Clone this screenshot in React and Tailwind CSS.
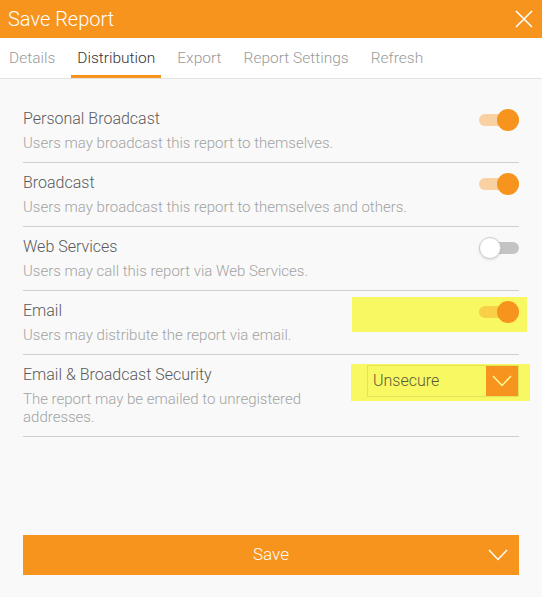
import { useState } from 'react';

const tabs = ['Details', 'Distribution', 'Export', 'Report Settings', 'Refresh'];

const rows = [
    { title: 'Personal Broadcast', desc: 'Users may broadcast this report to themselves.', on: true },
    { title: 'Broadcast', desc: 'Users may broadcast this report to themselves and others.', on: true },
    { title: 'Web Services', desc: 'Users may call this report via Web Services.', on: false },
    { title: 'Email', desc: 'Users may distribute the report via email.', on: true, highlight: true },
];

function Chevron({ className }) {
    return (
        <svg viewBox="0 0 20 12" className={className} fill="none" stroke="currentColor" strokeWidth="1.5">
            <path d="M1 1 L10 10.5 L19 1" />
        </svg>
    );
}

function Toggle({ on }) {
    return (
        <div className="relative w-[40px] h-[22px]">
            <div className={`absolute left-0 right-0 top-[5px] h-[12px] rounded-full ${on ? 'bg-[#F7941D]/40' : 'bg-[#c4c4c4]'}`} />
            <div className={`absolute top-0 w-[22px] h-[22px] rounded-full ${on ? 'right-0 bg-[#F7941D]' : 'left-0 bg-white border border-[#d0d0d0] shadow-sm'}`} />
        </div>
    );
}

export default function App() {
    const [active, setActive] = useState('Distribution');

    return (
        <div className="w-[542px] h-[597px] flex flex-col bg-[#f9f9f9] font-['Roboto',sans-serif] font-light">
            <div className="h-[38px] bg-[#F7941D] flex items-center justify-between pl-[8px] pr-[9px]">
                <span className="text-white text-[20px] leading-none">Save Report</span>
                <svg viewBox="0 0 18 18" className="w-[18px] h-[18px] text-white" fill="none" stroke="currentColor" strokeWidth="1.6">
                    <path d="M1 1 L17 17 M17 1 L1 17" />
                </svg>
            </div>

            <div className="h-[41px] bg-white border-b border-[#e2e2e2] flex pl-[3px] gap-[10px]">
                {tabs.map((t) => (
                    <button key={t} onClick={() => setActive(t)} className={`px-[6px] pt-[4px] text-[15.5px] font-light border-b-[3px] ${active === t ? 'text-[#333] border-[#F7941D]' : 'text-[#9a9a9a] border-transparent'}`}>
                        {t}
                    </button>
                ))}
            </div>

            <div className="flex-1 flex flex-col px-[23px] pt-[20px] pb-[22px]">
                {rows.map((r) => (
                    <div key={r.title} className="flex justify-between border-b border-[#cfcfcf]">
                        <div className="pt-[10px] pb-[10px]">
                            <p className="text-[16px] leading-[20px] text-[#5a5a5a]">{r.title}</p>
                            <p className="mt-[5px] text-[15px] leading-[18px] text-[#a3a3a3]">{r.desc}</p>
                        </div>
                        <div className={`mt-[6px] h-[35px] pt-[4px] flex justify-end ${r.highlight ? 'bg-[#f8f862] w-[175px] -mr-[8px] pr-[8px]' : ''}`}>
                            <Toggle on={r.on} />
                        </div>
                    </div>
                ))}

                <div className="flex justify-between border-b border-[#cfcfcf]">
                    <div className="pt-[10px] pb-[10px] w-[310px]">
                        <p className="text-[16px] leading-[20px] text-[#5a5a5a]">Email &amp; Broadcast Security</p>
                        <p className="mt-[5px] text-[15px] leading-[18px] text-[#a3a3a3]">The report may be emailed to unregistered addresses.</p>
                    </div>
                    <div className="mt-[9px] -mr-[11px] w-[179px] h-[37px] pt-[1px] pl-[16px] pr-[11px] bg-[#f8f862]">
                        <div className="h-[32px] border border-[#e3e35a] flex items-stretch">
                            <span className="flex-1 flex items-center pl-[5px] text-[16px] text-[#5b5b3a]">Unsecure</span>
                            <span className="w-[32px] bg-[#F7941D] flex items-center justify-center text-[#fbfb9a]">
                                <Chevron className="w-[20px] h-[12px]" />
                            </span>
                        </div>
                    </div>
                </div>

                <button className="mt-auto h-[40px] bg-[#F7941D] relative flex items-center justify-center text-white text-[17px] font-light">
                    Save
                    <Chevron className="absolute right-[11px] top-[14px] w-[20px] h-[12px] text-white" />
                </button>
            </div>
        </div>
    );
}
